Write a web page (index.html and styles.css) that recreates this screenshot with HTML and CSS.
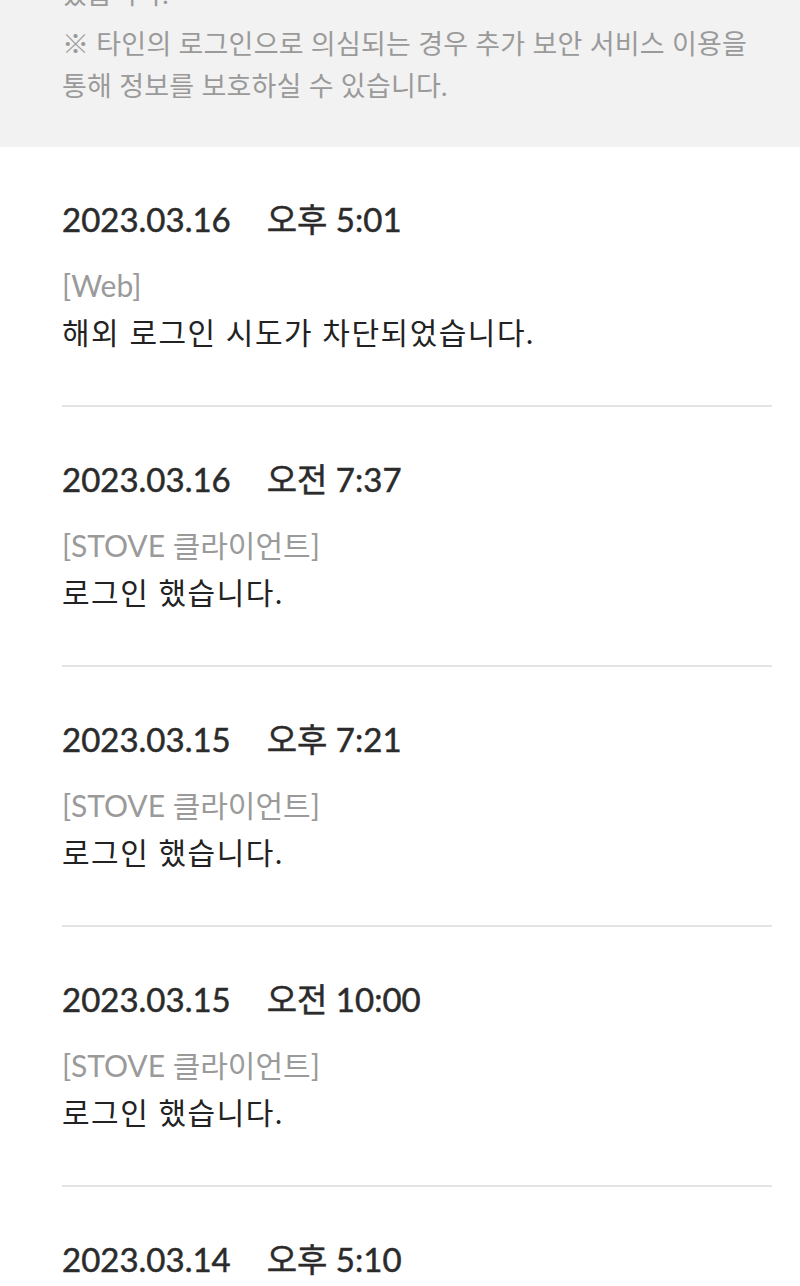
FILE: index.html
```html
<!DOCTYPE html>
<html lang="ko">
<head>
    <meta charset="UTF-8">
    <meta name="viewport" content="width=device-width, initial-scale=1.0">
    <title>로그인 기록</title>
    <link rel="stylesheet" href="styles.css">
</head>
<body>
    <div class="notice">
        <p class="notice-prev">있습니다.</p>
        <p>※ 타인의 로그인으로 의심되는 경우 추가 보안 서비스 이용을 통해 정보를 보호하실 수 있습니다.</p>
    </div>

    <ul class="history">
        <li class="item">
            <div class="when"><span>2023.03.16</span><span>오후 5:01</span></div>
            <p class="source">[Web]</p>
            <p class="message">해외 로그인 시도가 차단되었습니다.</p>
        </li>
        <li class="item">
            <div class="when"><span>2023.03.16</span><span>오전 7:37</span></div>
            <p class="source">[STOVE 클라이언트]</p>
            <p class="message">로그인 했습니다.</p>
        </li>
        <li class="item">
            <div class="when"><span>2023.03.15</span><span>오후 7:21</span></div>
            <p class="source">[STOVE 클라이언트]</p>
            <p class="message">로그인 했습니다.</p>
        </li>
        <li class="item">
            <div class="when"><span>2023.03.15</span><span>오전 10:00</span></div>
            <p class="source">[STOVE 클라이언트]</p>
            <p class="message">로그인 했습니다.</p>
        </li>
        <li class="item">
            <div class="when"><span>2023.03.14</span><span>오후 5:10</span></div>
            <p class="source">[STOVE 클라이언트]</p>
            <p class="message">로그인 했습니다.</p>
        </li>
    </ul>
</body>
</html>
```

FILE: styles.css
```css
body {
    margin: 0;
    font-family: Lato, "Noto Sans CJK KR", sans-serif;
    background: #fff;
    color: #222;
}
p {
    margin: 0;
}
.notice {
    margin-top: -27px;
    padding: 0 40px 40px 62px;
    background: #f2f2f2;
    color: #9a9a9a;
    font-size: 27px;
    line-height: 42px;
    letter-spacing: 0.2px;
}
.notice-prev {
    margin-bottom: 8px;
}
.history {
    list-style: none;
    margin: 0 28px 0 62px;
    padding: 0;
}
.item {
    padding: 50px 0 48px;
    border-bottom: 2px solid #e4e4e4;
}
.when {
    display: flex;
    gap: 36px;
    font-size: 33px;
    line-height: 44px;
    color: #2b2b2b;
    margin-bottom: 22px;
    -webkit-text-stroke: 0.5px #2b2b2b;
}
.source {
    font-size: 30px;
    line-height: 44px;
    color: #9a9a9a;
}
.message {
    font-size: 30px;
    line-height: 50px;
    letter-spacing: 1.5px;
    color: #222;
}
```
